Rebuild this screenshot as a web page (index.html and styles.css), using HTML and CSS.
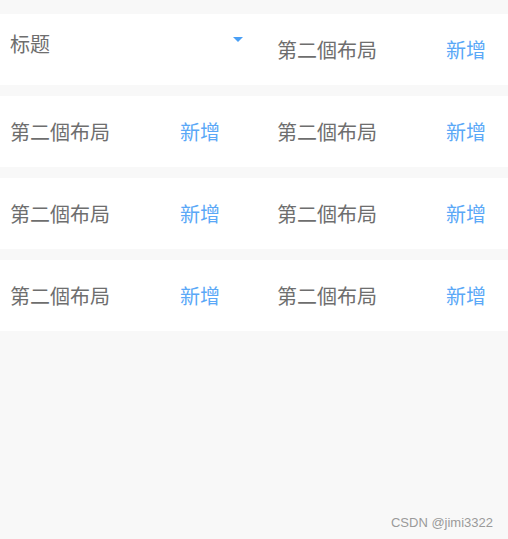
FILE: index.html
```html
<!DOCTYPE html>
<html lang="zh">
<head>
<meta charset="utf-8">
<link rel="stylesheet" href="styles.css">
</head>
<body>
<div class="page">
  <div class="row">
    <div class="cell cell-left picker">
      <span class="picker-label">标题</span>
      <span class="caret"></span>
    </div>
    <div class="cell cell-right">
      <span class="label">第二個布局</span>
      <span class="action">新增</span>
    </div>
  </div>
  <div class="row">
    <div class="cell cell-left">
      <span class="label">第二個布局</span>
      <span class="action">新增</span>
    </div>
    <div class="cell cell-right">
      <span class="label">第二個布局</span>
      <span class="action">新增</span>
    </div>
  </div>
  <div class="row">
    <div class="cell cell-left">
      <span class="label">第二個布局</span>
      <span class="action">新增</span>
    </div>
    <div class="cell cell-right">
      <span class="label">第二個布局</span>
      <span class="action">新增</span>
    </div>
  </div>
  <div class="row">
    <div class="cell cell-left">
      <span class="label">第二個布局</span>
      <span class="action">新增</span>
    </div>
    <div class="cell cell-right">
      <span class="label">第二個布局</span>
      <span class="action">新增</span>
    </div>
  </div>
</div>
<div class="watermark">CSDN @jimi3322</div>
</body>
</html>
```

FILE: styles.css
```css
html, body {
  margin: 0;
  padding: 0;
  background: #f8f8f8;
  height: 100%;
}
body {
  font-family: "Noto Sans CJK SC", "Noto Sans", sans-serif;
  position: relative;
}
.page {
  padding-top: 14px;
  display: flex;
  flex-direction: column;
  gap: 11px;
}
.row {
  height: 71px;
  background: #ffffff;
  display: grid;
  grid-template-columns: 1fr 1fr;
}
.cell {
  display: flex;
  align-items: center;
  justify-content: space-between;
  padding-top: 1px;
  box-sizing: border-box;
  font-size: 20px;
  line-height: 28px;
}
.cell-left {
  padding-left: 10px;
  padding-right: 34px;
}
.cell-right {
  padding-left: 23px;
  padding-right: 22px;
}
.label, .picker-label {
  color: #6e6e6e;
}
.action {
  color: #5aa8f7;
}
.picker {
  align-items: flex-start;
  padding-top: 16px;
  padding-right: 11px;
}
.caret {
  margin-top: 7px;
  width: 0;
  height: 0;
  border-left: 5px solid transparent;
  border-right: 5px solid transparent;
  border-top: 5px solid #4a9ff5;
}
.watermark {
  position: absolute;
  right: 15px;
  bottom: 9px;
  font-family: "Liberation Sans", Arial, sans-serif;
  font-size: 13px;
  color: #9a9a9a;
}
```
